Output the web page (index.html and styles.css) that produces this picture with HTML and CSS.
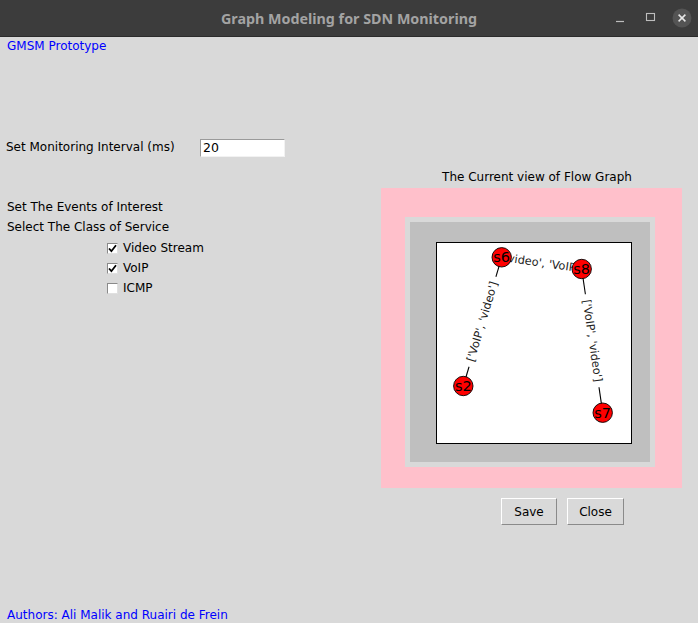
FILE: index.html
```html
<!DOCTYPE html>
<html>
<head>
<meta charset="utf-8">
<link rel="stylesheet" href="styles.css">
</head>
<body>
<div class="titlebar">
  <div class="tb-spacer"></div>
  <div class="title">Graph Modeling for SDN Monitoring</div>
  <div class="controls">
    <svg class="ctl" width="20" height="20" viewBox="0 0 20 20"><line x1="6" y1="13.5" x2="14" y2="13.5" stroke="#bdbdbd" stroke-width="1.2"/></svg>
    <svg class="ctl" width="20" height="20" viewBox="0 0 20 20"><rect x="5.5" y="5.5" width="8" height="7" fill="none" stroke="#bdbdbd" stroke-width="1.1"/></svg>
    <svg class="ctl close" width="20" height="20" viewBox="0 0 20 20"><circle cx="10" cy="10" r="9.5" fill="#545454"/><path d="M6.6 6.6 L13.4 13.4 M13.4 6.6 L6.6 13.4" stroke="#e8e8e8" stroke-width="1.5"/></svg>
  </div>
</div>
<div class="main">
  <div class="left">
    <div class="brand">GMSM Prototype</div>
    <div class="interval-row">
      <span class="label">Set Monitoring Interval (ms)</span>
      <div class="entry">20</div>
    </div>
    <div class="section first">Set The Events of Interest</div>
    <div class="section">Select The Class of Service</div>
    <div class="checks">
      <div class="check"><span class="box"><svg width="9" height="9" viewBox="0 0 9 9"><path d="M1 4.5 L3.4 7.2 L8 1.3" fill="none" stroke="#000" stroke-width="1.8"/></svg></span>Video Stream</div>
      <div class="check"><span class="box"><svg width="9" height="9" viewBox="0 0 9 9"><path d="M1 4.5 L3.4 7.2 L8 1.3" fill="none" stroke="#000" stroke-width="1.8"/></svg></span>VoIP</div>
      <div class="check"><span class="box"></span>ICMP</div>
    </div>
    <div class="authors">Authors: Ali Malik and Ruairi de Frein</div>
  </div>
  <div class="right">
    <div class="graph-title">The Current view of Flow Graph</div>
    <div class="pink">
      <div class="frame">
        <div class="plot">
          <div class="canvas">
            <svg width="194" height="200" viewBox="0 0 194 200" font-family="DejaVu Sans, sans-serif">
              <g stroke="#000" stroke-width="1.1">
                <line x1="26.3" y1="143" x2="64.7" y2="14.3"/>
                <line x1="64.7" y1="14.3" x2="144.7" y2="26"/>
                <line x1="144.7" y1="26" x2="165.7" y2="169.7"/>
              </g>
              <g transform="translate(45.5 78.7) rotate(-73.4)">
                <rect x="-47" y="-7" width="94" height="14" fill="#fff"/>
                <text x="0" y="0" font-size="11.3" text-anchor="middle" dominant-baseline="central" fill="#222">['VoIP', 'video']</text>
              </g>
              <g transform="translate(155.2 97.8) rotate(81.7)">
                <rect x="-47" y="-7" width="94" height="14" fill="#fff"/>
                <text x="0" y="0" font-size="11.3" text-anchor="middle" dominant-baseline="central" fill="#222">['VoIP', 'video']</text>
              </g>
              <g transform="translate(104.7 20.2) rotate(8.3)">
                <rect x="-47" y="-7" width="94" height="14" fill="#fff"/>
                <text x="0" y="0" font-size="11.3" text-anchor="middle" dominant-baseline="central" fill="#222">['video', 'VoIP']</text>
              </g>
              <g fill="#ff0000" stroke="#000" stroke-width="0.9">
                <circle cx="64.7" cy="14.3" r="9.7"/>
                <circle cx="144.7" cy="26" r="9.7"/>
                <circle cx="26.3" cy="143" r="9.7"/>
                <circle cx="165.7" cy="169.7" r="9.7"/>
              </g>
              <g font-size="14.5" text-anchor="middle" dominant-baseline="central" fill="#000">
                <text x="64.7" y="14.3">s6</text>
                <text x="144.7" y="26">s8</text>
                <text x="26.3" y="143">s2</text>
                <text x="165.7" y="169.7">s7</text>
              </g>
            </svg>
          </div>
        </div>
      </div>
    </div>
    <div class="buttons">
      <button class="btn save">Save</button>
      <button class="btn closebtn">Close</button>
    </div>
  </div>
</div>
</body>
</html>
```

FILE: styles.css
```css
html, body {
  margin: 0;
  padding: 0;
}
body {
  width: 698px;
  height: 623px;
  overflow: hidden;
  background: #d9d9d9;
  font-family: "DejaVu Sans", sans-serif;
  font-size: 12px;
  color: #000;
}
.titlebar {
  height: 36px;
  background: #3c3c3c;
  border-bottom: 1px solid #2b2b2b;
  display: grid;
  grid-template-columns: 1fr auto 1fr;
  align-items: center;
}
.title {
  font-family: "Noto Sans", sans-serif;
  font-weight: 700;
  font-size: 14.3px;
  color: #a3a3a3;
  letter-spacing: 0;
}
.controls {
  display: flex;
  justify-content: flex-end;
  align-items: center;
  gap: 11px;
  padding-right: 6px;
}
.ctl {
  display: block;
}
.main {
  display: flex;
  height: 586px;
}
.left {
  width: 381px;
  box-sizing: border-box;
  padding-left: 7px;
  display: flex;
  flex-direction: column;
}
.brand {
  color: #0000ff;
  line-height: 15px;
  margin-top: 2px;
}
.interval-row {
  display: flex;
  align-items: center;
  margin-top: 85px;
  height: 18px;
}
.interval-row .label {
  margin-left: -1px;
  width: 194px;
  margin-top: -3px;
}
.entry {
  width: 81px;
  height: 16px;
  background: #fff;
  border-top: 1px solid #9a9a9a;
  border-left: 1px solid #9a9a9a;
  border-right: 1px solid #f2f2f2;
  border-bottom: 1px solid #f2f2f2;
  padding-left: 2px;
  line-height: 16px;
  font-size: 12.5px;
}
.section {
  line-height: 20px;
}
.section.first {
  margin-top: 40px;
}
.checks {
  margin-left: 100px;
  margin-top: 1px;
}
.check {
  display: flex;
  align-items: center;
  line-height: 20px;
  height: 20px;
}
.box {
  width: 9px;
  height: 9px;
  background: #fff;
  border-top: 1px solid #8a8a8a;
  border-left: 1px solid #8a8a8a;
  border-right: 1px solid #e0e0e0;
  border-bottom: 1px solid #e0e0e0;
  margin-right: 5px;
  display: flex;
  align-items: center;
  justify-content: center;
}
.box svg {
  display: block;
}
.authors {
  margin-top: auto;
  color: #0000ff;
  line-height: 15px;
}
.right {
  width: 301px;
  display: flex;
  flex-direction: column;
}
.graph-title {
  margin-top: 132px;
  line-height: 16px;
  text-align: center;
  padding-left: 11px;
}
.pink {
  margin-top: 3px;
  background: #ffc0cb;
  height: 300px;
  box-sizing: border-box;
  padding: 29px 0 0 24px;
}
.frame {
  width: 250px;
  height: 250px;
  box-sizing: border-box;
  background: #d9d9d9;
  padding: 5px;
}
.plot {
  width: 240px;
  height: 240px;
  background: #bfbfbf;
  box-sizing: border-box;
  padding: 20px 0 0 26px;
}
.canvas {
  width: 194px;
  height: 200px;
  background: #fff;
  border: 1px solid #000;
}
.canvas svg {
  display: block;
}
.buttons {
  display: flex;
  gap: 10px;
  margin-top: 10px;
  padding-left: 120px;
}
.btn {
  font-family: "DejaVu Sans", sans-serif;
  font-size: 12px;
  height: 27px;
  background: #d9d9d9;
  border-top: 1px solid #fff;
  border-left: 1px solid #fff;
  border-right: 1px solid #8a8a8a;
  border-bottom: 1px solid #8a8a8a;
  padding: 0;
  color: #000;
}
.save {
  width: 56px;
}
.closebtn {
  width: 57px;
}
```
